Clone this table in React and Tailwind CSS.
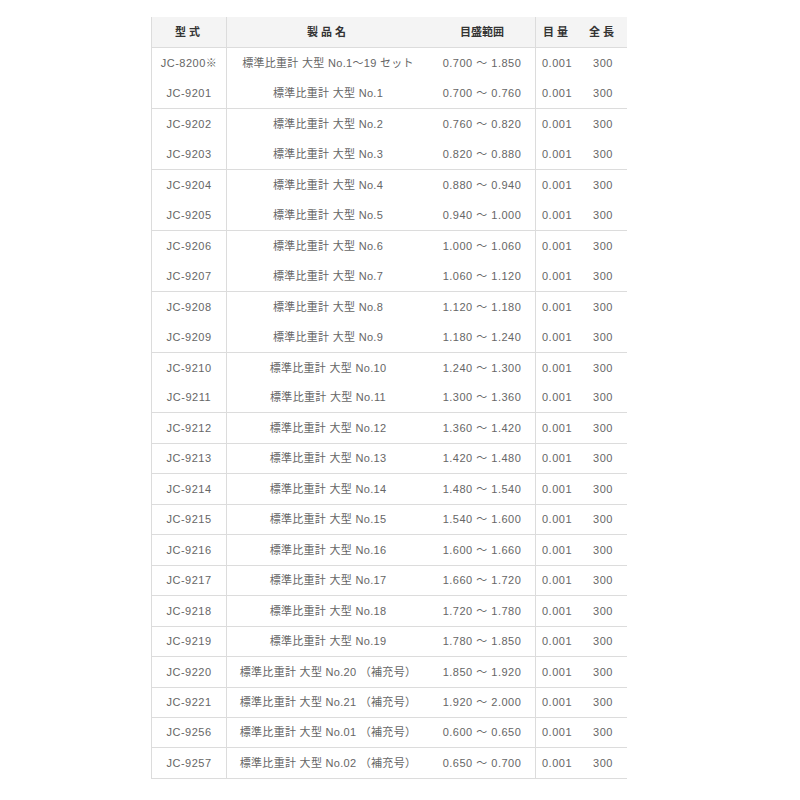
import React from "react";

const rows = [
  ["JC-8200※", "標準比重計 大型 No.1〜19 セット", "0.700 〜 1.850"],
  ["JC-9201", "標準比重計 大型 No.1", "0.700 〜 0.760"],
  ["JC-9202", "標準比重計 大型 No.2", "0.760 〜 0.820"],
  ["JC-9203", "標準比重計 大型 No.3", "0.820 〜 0.880"],
  ["JC-9204", "標準比重計 大型 No.4", "0.880 〜 0.940"],
  ["JC-9205", "標準比重計 大型 No.5", "0.940 〜 1.000"],
  ["JC-9206", "標準比重計 大型 No.6", "1.000 〜 1.060"],
  ["JC-9207", "標準比重計 大型 No.7", "1.060 〜 1.120"],
  ["JC-9208", "標準比重計 大型 No.8", "1.120 〜 1.180"],
  ["JC-9209", "標準比重計 大型 No.9", "1.180 〜 1.240"],
  ["JC-9210", "標準比重計 大型 No.10", "1.240 〜 1.300"],
  ["JC-9211", "標準比重計 大型 No.11", "1.300 〜 1.360"],
  ["JC-9212", "標準比重計 大型 No.12", "1.360 〜 1.420"],
  ["JC-9213", "標準比重計 大型 No.13", "1.420 〜 1.480"],
  ["JC-9214", "標準比重計 大型 No.14", "1.480 〜 1.540"],
  ["JC-9215", "標準比重計 大型 No.15", "1.540 〜 1.600"],
  ["JC-9216", "標準比重計 大型 No.16", "1.600 〜 1.660"],
  ["JC-9217", "標準比重計 大型 No.17", "1.660 〜 1.720"],
  ["JC-9218", "標準比重計 大型 No.18", "1.720 〜 1.780"],
  ["JC-9219", "標準比重計 大型 No.19", "1.780 〜 1.850"],
  ["JC-9220", "標準比重計 大型 No.20 （補充号）", "1.850 〜 1.920"],
  ["JC-9221", "標準比重計 大型 No.21 （補充号）", "1.920 〜 2.000"],
  ["JC-9256", "標準比重計 大型 No.01 （補充号）", "0.600 〜 0.650"],
  ["JC-9257", "標準比重計 大型 No.02 （補充号）", "0.650 〜 0.700"],
];

const font = { fontFamily: '"Liberation Sans", "Noto Sans CJK JP", sans-serif' };

export default function App() {
  return (
    <div className="min-h-screen w-[800px] bg-white pt-[17px] pl-[151px]" style={font}>
      <div className="w-[476px] border-l border-[#dcdcdc] text-[11px]">
        {/* header */}
        <div className="grid h-[31px] grid-cols-[75px_202px_107px_42px_50px] items-center border-b border-[#dcdcdc] bg-[#f4f4f4] font-bold text-[#333]">
          <div className="flex h-full items-center justify-center border-r border-[#dcdcdc] tracking-[3px]">型式</div>
          <div className="text-center tracking-[3px]">製品名</div>
          <div className="flex h-full items-center justify-center border-r border-[#dcdcdc]">目盛範囲</div>
          <div className="text-center tracking-[3px]">目量</div>
          <div className="text-center tracking-[3px]">全長</div>
        </div>
        {rows.map((r, i) => {
          const line = i >= 11 || i % 2 === 1;
          return (
            <div
              key={r[0]}
              className={
                line
                  ? "grid h-[30.46px] grid-cols-[75px_202px_107px_42px_50px] items-center border-b border-[#dcdcdc] text-[#666]"
                  : "grid h-[30.46px] grid-cols-[75px_202px_107px_42px_50px] items-center text-[#666]"
              }
            >
              <div className="flex h-full items-center justify-center border-r border-[#dcdcdc] tracking-[0.5px]">{r[0]}</div>
              <div className="text-center whitespace-nowrap tracking-[0.3px]">{r[1]}</div>
              <div className="flex h-full items-center justify-center border-r border-[#dcdcdc] tracking-[0.5px]">{r[2]}</div>
              <div className="text-center tracking-[0.5px]">0.001</div>
              <div className="text-center tracking-[0.5px]">300</div>
            </div>
          );
        })}
      </div>
    </div>
  );
}
